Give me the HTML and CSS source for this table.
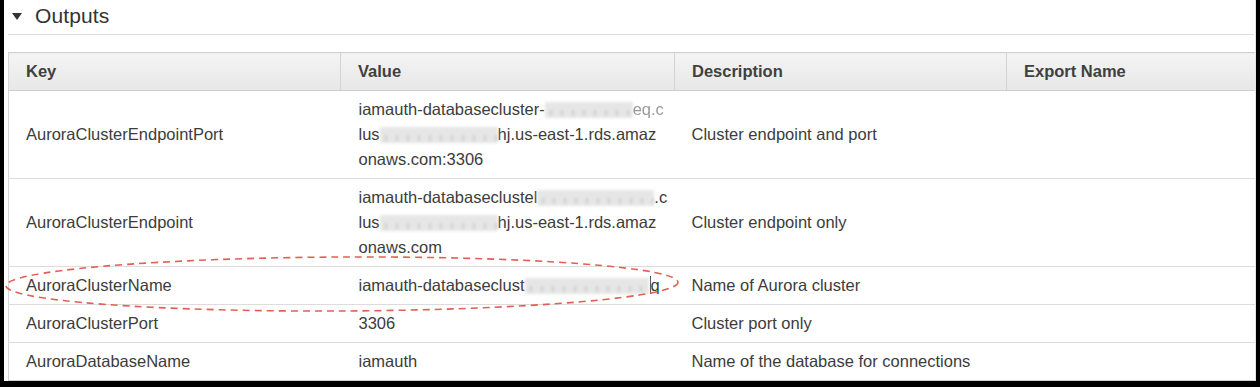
FILE: index.html
```html
<!DOCTYPE html>
<html lang="en">
<head>
<meta charset="utf-8">
<title>Stack outputs</title>
<link rel="stylesheet" href="styles.css">
</head>
<body>
<div class="panel">
  <div class="section-head">
    <span class="caret"></span>
    <span class="section-title">Outputs</span>
  </div>
  <table class="outputs">
    <colgroup>
      <col class="c-key"><col class="c-val"><col class="c-desc"><col class="c-exp">
    </colgroup>
    <thead>
      <tr><th>Key</th><th>Value</th><th>Description</th><th>Export Name</th></tr>
    </thead>
    <tbody>
      <tr>
        <td>AuroraClusterEndpointPort</td>
        <td class="val">
          <span class="ln">iamauth-databasecluster-<span class="redact r1"></span><span class="faint">eq.c</span></span>
          <span class="ln">lus<span class="redact r2"></span>hj.us-east-1.rds.amaz</span>
          <span class="ln">onaws.com:3306</span>
        </td>
        <td>Cluster endpoint and port</td>
        <td></td>
      </tr>
      <tr>
        <td>AuroraClusterEndpoint</td>
        <td class="val">
          <span class="ln">iamauth-databaseclustel<span class="redact r3"></span>.c</span>
          <span class="ln">lus<span class="redact r2"></span>hj.us-east-1.rds.amaz</span>
          <span class="ln">onaws.com</span>
        </td>
        <td>Cluster endpoint only</td>
        <td></td>
      </tr>
      <tr>
        <td>AuroraClusterName</td>
        <td class="val"><span class="ln">iamauth-databaseclust<span class="redact r4"></span><span class="cursor">q</span></span></td>
        <td>Name of Aurora cluster</td>
        <td></td>
      </tr>
      <tr>
        <td>AuroraClusterPort</td>
        <td>3306</td>
        <td>Cluster port only</td>
        <td></td>
      </tr>
      <tr>
        <td>AuroraDatabaseName</td>
        <td>iamauth</td>
        <td>Name of the database for connections</td>
        <td></td>
      </tr>
    </tbody>
  </table>
  <svg class="callout" width="690" height="66" viewBox="0 0 690 66" aria-hidden="true">
    <ellipse cx="338" cy="32" rx="336" ry="27" fill="none" stroke="#e06055" stroke-width="1.6" stroke-dasharray="7 5" transform="rotate(-0.3 338 32)"/>
  </svg>
</div>
</body>
</html>
```

FILE: styles.css
```css
html, body {
  margin: 0;
  padding: 0;
}

body {
  background: #000;
  width: 1260px;
  height: 387px;
  overflow: hidden;
  font-family: "Liberation Sans", Arial, Helvetica, sans-serif;
  color: #3c3c3c;
}

.panel {
  position: relative;
  margin: 0 4px;
  height: 381px;
  background: #fff;
  overflow: hidden;
  box-sizing: border-box;
  border-right: 1px solid #e4e4e4;
  padding-right: 1px;
}

.section-head {
  display: flex;
  align-items: center;
  height: 31px;
  margin-left: 4px;
  border-bottom: 1px solid #dcdcdc;
  padding-bottom: 3px;
}

.caret {
  width: 0;
  height: 0;
  margin-left: 4px;
  border-left: 5px solid transparent;
  border-right: 5px solid transparent;
  border-top: 7px solid #333;
  margin-top: 1px;
}

.section-title {
  margin-left: 13px;
  font-size: 21px;
  color: #333;
  letter-spacing: 0.1px;
}

.outputs {
  margin: 17px 0 0 4px;
  width: 1247px;
  border-collapse: collapse;
  table-layout: fixed;
  font-size: 16.5px;
  border-left: 1px solid #d6d6d6;
  border-bottom: 1px solid #d0d0d0;
}

.c-key { width: 332px; }
.c-val { width: 334px; }
.c-desc { width: 332px; }
.c-exp { width: auto; }

.outputs th {
  height: 37px;
  padding: 0 17px;
  text-align: left;
  font-weight: bold;
  color: #404040;
  background: linear-gradient(#f4f4f4, #e7e7e7);
  border-top: 1px solid #cfcfcf;
  border-bottom: 1px solid #cfcfcf;
  border-right: 1px solid #d3d3d3;
}

.outputs th:last-child { border-right: none; }

.outputs td {
  padding: 6px 17px;
  line-height: 25px;
  border-top: 1px solid #dcdcdc;
  vertical-align: middle;
  white-space: nowrap;
}

.outputs td:nth-child(2) { padding-left: 18px; }

.outputs td.val { padding-right: 2px; }

.ln {
  display: block;
  white-space: nowrap;
}

/* smudged-out part of a hostname */
.redact {
  display: inline-block;
  vertical-align: top;
  height: 16px;
  margin-top: 5px;
  background:
    repeating-linear-gradient(90deg, transparent 0 5px, rgba(150,150,150,0.35) 5px 7px, transparent 7px 11px),
    #e6e6e6;
  background-size: 100% 6px, auto;
  background-position: 0 8px, 0 0;
  background-repeat: no-repeat, repeat;
  filter: blur(1.6px);
}

.r1 { width: 88px; }
.r2 { width: 118px; }
.r3 { width: 117px; }
.r4 { width: 124px; }

.faint {
  color: #9a9a9a;
  filter: blur(0.6px);
}

.cursor {
  border-left: 1px solid #444;
  margin-left: 1px;
}

.callout {
  position: absolute;
  left: 0;
  top: 252px;
  pointer-events: none;
}
```
